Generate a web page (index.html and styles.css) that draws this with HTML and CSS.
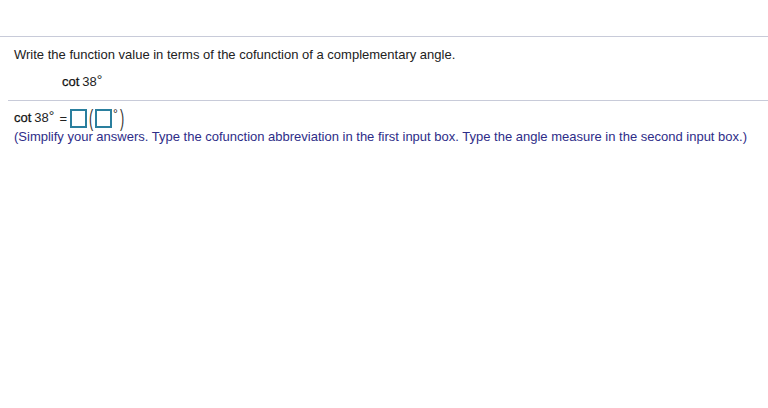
FILE: index.html
```html
<!DOCTYPE html>
<html>
<head>
<meta charset="utf-8">
<link rel="stylesheet" href="styles.css">
</head>
<body>
<div class="top"></div>
<div class="question">
  <div class="prompt">Write the function value in terms of the cofunction of a complementary angle.</div>
  <div class="expr"><span class="fn">cot</span><span class="num">38</span><span class="deg">°</span></div>
</div>
<div class="answer">
  <div class="eq">
    <span class="fn">cot</span><span class="num">38</span><span class="deg">°</span><span class="equals">=</span><span class="box"></span><span class="paren">(</span><span class="box"></span><span class="deg2">°</span><span class="paren">)</span>
  </div>
  <div class="hint">(Simplify your answers. Type the cofunction abbreviation in the first input box. Type the angle measure in the second input box.)</div>
</div>
</body>
</html>
```

FILE: styles.css
```css
html, body {
  margin: 0;
  padding: 0;
  background: #ffffff;
}
body {
  font-family: "Liberation Sans", Arial, sans-serif;
  font-size: 13px;
  color: #222222;
}
.top {
  height: 36px;
  border-bottom: 1px solid #c8cbd9;
}
.question {
  padding: 10px 0 0 14px;
}
.prompt {
  line-height: 15px;
}
.expr {
  display: flex;
  margin: 12px 0 0 48px;
  height: 26px;
  align-items: flex-start;
}
.fn {
  color: #111;
  -webkit-text-stroke: 0.25px #111;
  line-height: 16px;
}
.num {
  margin-left: 3px;
  line-height: 16px;
}
.deg {
  font-size: 14px;
  line-height: 16px;
  position: relative;
  top: -2px;
}
.answer {
  margin-left: 8px;
  border-top: 1px solid #c8cbd9;
  padding: 7px 0 0 6px;
}
.eq {
  display: flex;
  align-items: center;
  height: 20px;
}
.equals {
  margin: 0 3px 0 5px;
}
.box {
  display: inline-block;
  box-sizing: border-box;
  width: 17px;
  height: 19px;
  border: 2px solid #2a7f9e;
}
.paren {
  font-size: 18px;
  line-height: 18px;
  display: inline-block;
  transform: scale(0.7, 1.3);
  color: #333;
  margin: 0 1px;
}
.deg2 {
  font-size: 12px;
  align-self: flex-start;
  margin-left: 1px;
  margin-top: -1px;
}
.hint {
  color: #2e2d88;
  line-height: 16px;
  margin-top: 1px;
}
```
